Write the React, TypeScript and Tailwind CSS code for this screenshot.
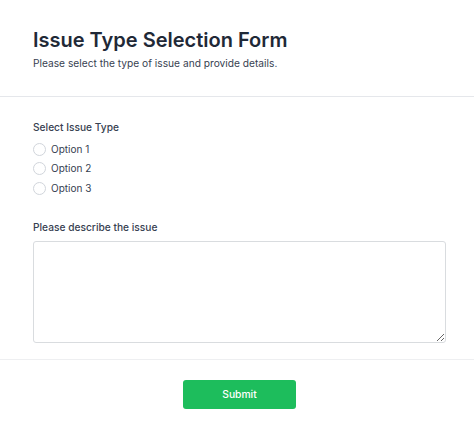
export default function App() {
  const options = ['Option 1', 'Option 2', 'Option 3'];
  return (
    <div className="min-h-screen w-full bg-white font-['Inter',sans-serif] text-[#1f2937]">
      <div className="px-[33px] pt-[28px] pb-[26px] border-b border-[#e5e7eb]">
        <h1 className="text-[20px] leading-[24px] font-semibold text-[#1f2937]">Issue Type Selection Form</h1>
        <p className="mt-[4px] text-[10.2px] leading-[14px] text-[#374151]">
          Please select the type of issue and provide details.
        </p>
      </div>
      <div className="pl-[33px] pr-[28px] pt-[23px] pb-[16px] border-b border-[#eeeff1]">
        <div className="text-[10.2px] leading-[14px] font-medium text-[#374151]">Select Issue Type</div>
        <div className="mt-[8px] flex flex-col gap-[5.5px]">
          {options.map((o) => (
            <label key={o} className="flex items-center gap-[5px] h-[14px]">
              <span className="w-[13px] h-[13px] rounded-full border border-[#d1d5db] bg-white" />
              <span className="text-[10px] text-[#374151]">{o}</span>
            </label>
          ))}
        </div>
        <div className="mt-[25px] text-[10.2px] leading-[14px] font-medium text-[#374151]">Please describe the issue</div>
        <textarea className="mt-[7px] block w-full h-[102px] rounded-[3px] border border-[#d9dcdf] bg-white" />
      </div>
      <div className="flex justify-center pt-[20px]">
        <button className="ml-[5px] w-[113px] h-[29px] rounded-[3px] bg-[#1dbd5c] text-white text-[10.3px] font-medium">
          Submit
        </button>
      </div>
    </div>
  );
}
